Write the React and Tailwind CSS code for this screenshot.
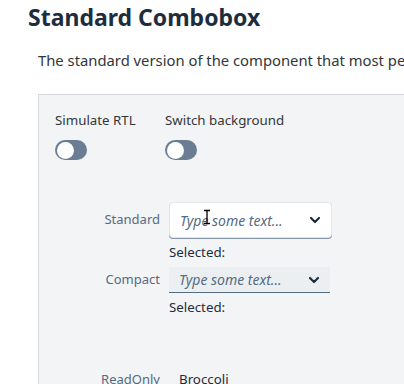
import React from "react";

function Switch() {
  return (
    <div className="w-[32px] h-[20px] rounded-full bg-[#6a7d92] flex items-center px-[2px]">
      <div className="w-[17px] h-[17px] rounded-full bg-white" />
    </div>
  );
}

function Chevron() {
  return (
    <svg width="12" height="8" viewBox="0 0 12 8" className="shrink-0">
      <path d="M2 2 L6 6 L10 2" fill="none" stroke="#1d2d3e" strokeWidth="2.2" strokeLinecap="round" strokeLinejoin="round" />
    </svg>
  );
}

export default function App() {
  return (
    <div className="w-[404px] h-[384px] overflow-hidden bg-white" style={{ fontFamily: '"Noto Sans", "Open Sans", sans-serif' }}>
      <h1 className="pl-[28px] pt-[2px] text-[23px] font-bold leading-[30px] text-[#1d2d3e] whitespace-nowrap">Standard Combobox</h1>
      <p className="pl-[38px] mt-[18px] text-[14.8px] leading-[20px] text-[#32363a] whitespace-nowrap">The standard version of the component that most people will use</p>
      <div className="ml-[38px] mt-[24px] w-[420px] h-[320px] border border-[#d5d8dc] bg-[#f3f4f5] pl-[16px] pt-[15px]">
        <div className="flex">
          <div className="w-[110px] flex flex-col gap-[10px]">
            <span className="text-[13.3px] leading-[20px] text-[#32363a]">Simulate RTL</span>
            <Switch />
          </div>
          <div className="flex flex-col gap-[10px]">
            <span className="text-[13.3px] leading-[20px] text-[#32363a]">Switch background</span>
            <Switch />
          </div>
        </div>
        <div className="mt-[42px] flex flex-col">
          <div className="flex items-center">
            <span className="w-[114px] pr-[9px] text-right text-[13px] text-[#556b82]">Standard</span>
            <div className="relative w-[163px] h-[36px] bg-white rounded-[4px] border border-[#e3e6ea] shadow-[0_1px_0_#8396a8] flex items-center pl-[10px] pr-[10px]">
              <span className="flex-1 italic text-[14px] text-[#556b82]">Type some text...</span>
              <Chevron />
              <svg className="absolute left-[33px] top-[6px]" width="8" height="16" viewBox="0 0 8 16">
                <path d="M1 1.5 H7 M4 1.5 V14.5 M1 14.5 H7" stroke="#000" strokeWidth="1.3" fill="none" />
              </svg>
            </div>
          </div>
          <div className="pl-[114px] mt-[4px] text-[13.3px] leading-[20px] text-[#1d2d3e]">Selected:</div>
          <div className="flex items-center mt-[5px]">
            <span className="w-[114px] pr-[9px] text-right text-[13px] text-[#556b82]">Compact</span>
            <div className="w-[161px] h-[26px] bg-[#eceff2] border-b border-[#556b82] flex items-center pl-[10px] pr-[10px]">
              <span className="flex-1 italic text-[14px] text-[#556b82]">Type some text...</span>
              <Chevron />
            </div>
          </div>
          <div className="pl-[114px] mt-[4px] text-[13.3px] leading-[20px] text-[#1d2d3e]">Selected:</div>
          <div className="flex items-center mt-[53px]">
            <span className="w-[114px] pr-[9px] text-right text-[13px] text-[#556b82]">ReadOnly</span>
            <span className="pl-[10px] text-[13.3px] text-[#1d2d3e]">Broccoli</span>
          </div>
        </div>
      </div>
    </div>
  );
}
